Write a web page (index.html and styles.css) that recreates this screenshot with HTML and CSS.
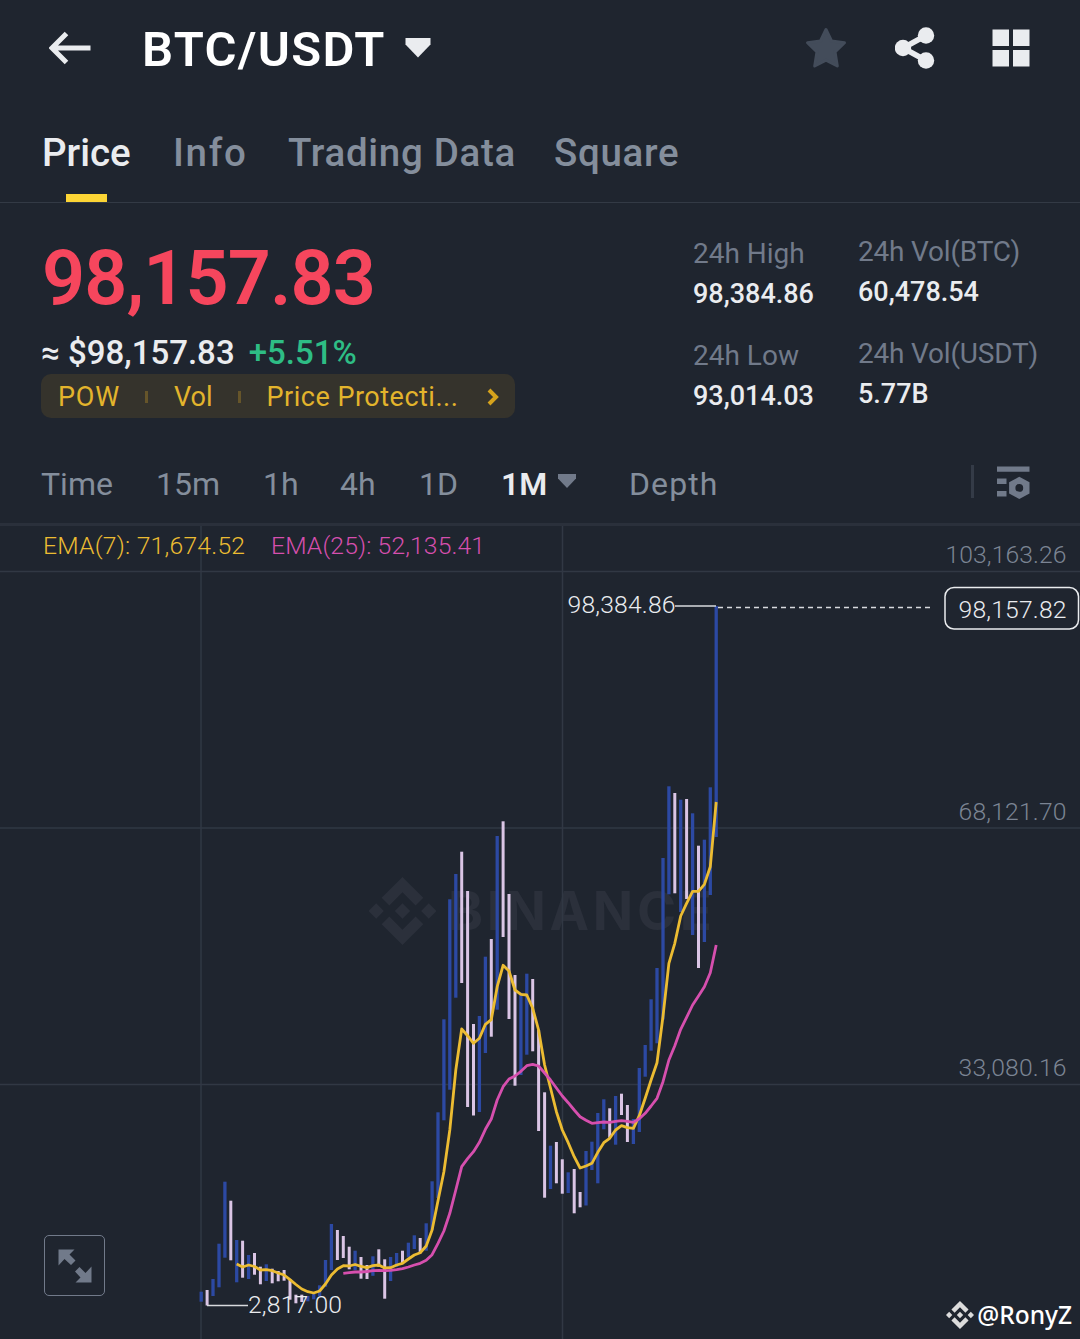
FILE: index.html
```html
<!DOCTYPE html>
<html lang="en">
  <head>
    <meta charset="UTF-8" />
    <meta name="viewport" content="width=device-width, initial-scale=1.0" />
    <title>BTC/USDT</title>
    <link rel="stylesheet" href="styles.css">
  </head>
  <body>
    <header class="topbar">
      <svg class="back" width="42" height="34" viewBox="0 0 42 34" aria-label="Back">
        <path d="M41.500 17H4M17.500 2.500L3 17l14.500 14.500" fill="none" stroke="#eaecef" stroke-width="5" />
      </svg>
      <h1 class="pair">BTC/USDT</h1>
      <svg class="pair-caret" width="26" height="20" viewBox="0 0 26 20">
        <path d="M.5 0h25v6.500L13 19.500.5 6.500z" fill="#eaecef" />
      </svg>
      <div class="actions">
        <svg width="42" height="42" viewBox="0 0 42 42" aria-label="Favorite">
          <path d="M21 2.500l5.500 11.500 13 1.700-9.500 9.100 2.300 14.200L21 33.200 9.700 39l2.300-14.200-9.500-9.100 13-1.700z" fill="#434c5a" stroke="#434c5a" stroke-width="3" stroke-linejoin="round" />
        </svg>
        <svg width="40" height="42" viewBox="0 0 40 42" aria-label="Share">
          <path d="M31 8.500L8 21l23 12.500" fill="none" stroke="#eaecef" stroke-width="5.500" />
          <circle cx="31" cy="8.500" r="8.200" fill="#eaecef" />
          <circle cx="8" cy="21" r="8.200" fill="#eaecef" />
          <circle cx="31" cy="33.500" r="8.200" fill="#eaecef" />
        </svg>
        <svg width="38" height="38" viewBox="0 0 38 38" aria-label="More">
          <path d="M.5.500H17V17H.5zM21 .500h16.500V17H21zM.5 21H17v16.500H.5zM21 21h16.500v16.500H21z" fill="#eaecef" />
        </svg>
      </div>
    </header>

    <nav class="tabs">
      <a class="tab active">Price</a>
      <a class="tab tab-info">Info</a>
      <a class="tab">Trading Data</a>
      <a class="tab">Square</a>
    </nav>

    <section class="summary">
      <div class="quote">
        <div class="last-price">98,157.83</div>
        <div class="fiat">
          <span>≈ $98,157.83</span>
          <span class="change">+5.51%</span>
        </div>
        <div class="tags">
          <span class="tag-pow">POW</span>
          <i></i>
          <span>Vol</span>
          <i></i>
          <span class="tag-protect">Price Protecti...</span>
          <svg width="12" height="18" viewBox="0 0 12 18">
            <path d="M2 2l7 7-7 7" fill="none" stroke="#d6a31c" stroke-width="4" />
          </svg>
        </div>
      </div>

      <div class="stats">
        <dl>
          <dt>24h High</dt>
          <dd>98,384.86</dd>
          <dt>24h Low</dt>
          <dd>93,014.03</dd>
        </dl>
        <dl class="volumes">
          <dt>24h Vol(BTC)</dt>
          <dd>60,478.54</dd>
          <dt>24h Vol(USDT)</dt>
          <dd>5.77B</dd>
        </dl>
      </div>
    </section>

    <div class="periods">
      <span>Time</span>
      <span>15m</span>
      <span>1h</span>
      <span>4h</span>
      <span>1D</span>
      <span class="selected">
        1M
        <svg width="18" height="14" viewBox="0 0 18 14">
          <path d="M0 0h18v4.500L9 14 0 4.500z" fill="#717a8a" />
        </svg>
      </span>
      <span class="depth">Depth</span>
      <svg class="indicators" width="33" height="33" viewBox="0 0 33 33" aria-label="Indicators">
        <path fill="#717a8a" fill-rule="evenodd" d="M0 .500h32.500v5.300H0zM0 12.500h9.500v5.500H0zM0 25h9.500v5.500H0zM22.300 10.800l10.200 5.500v11.200l-10.200 5.500-10.200-5.500V16.300zM22.300 18a3.900 3.900 0 1 0 0 7.800 3.900 3.900 0 0 0 0-7.800z" />
      </svg>
    </div>

    <main class="chart">
      <svg class="plot" width="1080" height="813" viewBox="0 526 1080 813">
        <defs>
          <symbol id="logo" viewBox="0 0 24 24">
            <path d="M16.624 13.920l2.717 2.716-7.353 7.353-7.353-7.352 2.718-2.717 4.635 4.660 4.636-4.660zM21.260 9.284L24 12l-2.715 2.716L18.568 12l2.692-2.716zM11.988 9.285l2.717 2.691-2.717 2.717L9.272 12l2.716-2.715zM2.716 9.284L5.409 12l-2.692 2.692L0 12l2.716-2.716zM11.988.012l7.353 7.329-2.717 2.715-4.636-4.636-4.635 4.660-2.718-2.716z" />
          </symbol>
        </defs>

        <g class="watermark">
          <use href="#logo" x="368.500" y="877" width="68" height="68" />
          <text x="448" y="930" textLength="264">BINANCE</text>
        </g>

        <path class="grid" d="M0 571.500H1080M0 828H1080M0 1084.500H1080M201 526V1339M562.500 526V1339" />

        <g id="candles"></g>
        <polyline id="ema7" class="ema ema7" />
        <polyline id="ema25" class="ema ema25" />

        <g class="axis">
          <text x="1066.500" y="563" textLength="121">103,163.26</text>
          <text x="1066.500" y="820" textLength="108">68,121.70</text>
          <text x="1066.500" y="1076" textLength="108">33,080.16</text>
        </g>

        <path class="leader" d="M675 606H716M207 1305.500H248" />
        <path class="last-line" d="M718 607.500H934" />
        <text class="extreme" x="567.500" y="613" textLength="108">98,384.86</text>
        <text class="extreme" x="248" y="1313" textLength="94">2,817.00</text>

        <rect class="last-tag" x="945" y="587.500" width="133.500" height="41.500" rx="9" />
        <text class="last-value" x="1066.500" y="618" textLength="108">98,157.82</text>

        <text class="ema7-label" x="43" y="554" textLength="202">EMA(7): 71,674.52</text>
        <text class="ema25-label" x="271" y="554" textLength="214">EMA(25): 52,135.41</text>
      </svg>

      <button class="expand" aria-label="Full screen">
        <svg width="34" height="34" viewBox="0 0 34 34">
          <path fill="#717a8a" d="M.5.500h16l-5 5 6 6-4.500 4.500-6.500-6-6 6.500zM33.500 33.500h-16l5-5-5.500-6 4.500-4.500 6 6 6-6.500z" />
        </svg>
      </button>

      <div class="handle">
        <svg width="28" height="28"><use href="#logo" fill="#dcdcdc" /></svg>
        <span>@RonyZ</span>
      </div>
    </main>

    <script src="chart.js"></script>
  </body>
</html>
```
FILE: styles.css
```css
* {
  box-sizing: border-box;
}

body {
  margin: 0;
  width: 1080px;
  height: 1339px;
  overflow: hidden;
  background: #1f252f;
  color: #eaecef;
  font-family: Roboto, "Noto Sans", sans-serif;
}

svg {
  display: block;
  flex-shrink: 0;
}

/* top bar */
.topbar {
  display: flex;
  align-items: center;
  height: 95px;
  padding: 0 50px 0 49px;
}

.pair {
  margin: 0 0 0 51px;
  padding-top: 5px;
  font-size: 49px;
  font-weight: 600;
  line-height: 60px;
  letter-spacing: 1.3px;
  color: #fff;
}

.pair-caret {
  margin-left: 19px;
}

.actions {
  display: flex;
  align-items: center;
  margin-left: auto;
}

.actions svg + svg {
  margin-left: 48px;
}

.actions svg:last-child {
  margin-left: 57px;
}

/* tabs */
.tabs {
  display: grid;
  grid-template-columns: 131px 115px 266px auto;
  justify-items: start;
  height: 108px;
  padding: 39px 42px 0;
  border-bottom: 1px solid #333a45;
}

.tab {
  font-size: 38.5px;
  font-weight: 500;
  line-height: 38px;
  letter-spacing: 0.7px;
  color: #848e9c;
}

.tab-info {
  letter-spacing: 1.7px;
}

.tab.active {
  letter-spacing: 0;
  color: #eaecef;
}

.tab.active::after {
  content: "";
  display: block;
  width: 41px;
  height: 8px;
  margin: 22px auto 0;
  background: #fcd535;
}

/* price and 24h stats */
.summary {
  display: flex;
  justify-content: space-between;
  height: 215px;
  padding-left: 41px;
}

.quote {
  padding-top: 37px;
}

.last-price {
  padding-left: 1px;
  font-size: 75.5px;
  font-weight: 600;
  line-height: 76px;
  letter-spacing: -0.9px;
  color: #f6465d;
}

.fiat {
  display: flex;
  gap: 14px;
  margin-top: 18px;
  font-size: 33px;
  font-weight: 500;
  line-height: 38px;
}

.change {
  color: #2ebd85;
}

.tags {
  display: flex;
  align-items: center;
  width: 474px;
  height: 44px;
  margin-top: 2px;
  padding: 1px 16px 0 17px;
  border-radius: 10px;
  background: #35332c;
  color: #e3b42c;
  font-size: 27px;
}

.tags i {
  width: 3px;
  height: 12px;
  margin: 0 26px 0 25px;
  background: #66552a;
}

.tag-pow {
  letter-spacing: 0.8px;
}

.tag-protect {
  letter-spacing: 0.5px;
}

.tags svg {
  margin-left: auto;
}

.stats {
  display: grid;
  grid-template-columns: 165px auto;
  width: 387px;
  padding-top: 34px;
}

.stats dl {
  margin: 0;
}

.stats .volumes {
  margin-top: -2px;
}

.stats dt {
  font-size: 28px;
  line-height: 34px;
  color: #717a8a;
}

.volumes dt {
  letter-spacing: -0.2px;
}

.stats dd {
  margin: 6px 0 28px;
  font-size: 27px;
  font-weight: 500;
  line-height: 34px;
}

/* chart periods */
.periods {
  display: grid;
  grid-template-columns: 115px 107px 77px 79px 82px 128px 345px auto;
  align-items: center;
  height: 108px;
  padding: 27px 0 0 41px;
  border-bottom: 3px solid #2a303b;
  font-size: 32px;
  line-height: 44px;
  color: #848e9c;
}

.selected {
  display: flex;
  gap: 11px;
  align-items: center;
  font-weight: 600;
  color: #eaecef;
}

.selected svg {
  margin-top: -6px;
}

.depth {
  display: flex;
  align-items: center;
  justify-content: space-between;
  letter-spacing: 1.1px;
}

.depth::after {
  content: "";
  width: 3px;
  height: 33px;
  margin-top: -5px;
  background: #343b47;
}

.indicators {
  margin: -4px 0 0 23px;
}

/* chart */
.chart {
  position: relative;
}

.plot text {
  font-size: 24.7px;
  font-weight: 300;
}

.grid {
  fill: none;
  stroke: #313844;
  stroke-width: 1.5;
}

.watermark {
  fill: #2b303b;
}

.plot .watermark text {
  font-family: Inter, sans-serif;
  font-size: 53px;
  font-weight: 700;
}

.up {
  stroke: #2c49a3;
  stroke-width: 3.3;
}

.down {
  stroke: #dac5e5;
  stroke-width: 3;
}

.ema {
  fill: none;
  stroke-width: 2.8;
  stroke-linejoin: round;
}

.ema7 {
  stroke: #ecbc32;
}

.ema25 {
  stroke: #d64fae;
}

.ema7-label {
  fill: #ecbc32;
}

.ema25-label {
  fill: #d64fae;
}

.axis {
  fill: #7b8493;
  text-anchor: end;
}

.leader {
  stroke: #d8dade;
  stroke-width: 1.5;
}

.last-line {
  stroke: #d8dade;
  stroke-width: 1.5;
  stroke-dasharray: 5 4;
}

.extreme {
  fill: #eaecef;
}

.last-tag {
  fill: #1f252f;
  stroke: #eaecef;
  stroke-width: 1.5;
}

.last-value {
  fill: #eaecef;
  text-anchor: end;
}

.expand {
  position: absolute;
  left: 44px;
  bottom: 43px;
  display: flex;
  align-items: center;
  justify-content: center;
  width: 61px;
  height: 61px;
  padding: 0;
  border: 1.5px solid #717a8a;
  border-radius: 5px;
  background: none;
}

.handle {
  position: absolute;
  right: 8px;
  bottom: 6px;
  display: flex;
  align-items: center;
  gap: 3px;
  font-family: "Noto Sans", sans-serif;
  font-size: 24.5px;
  font-weight: 500;
  line-height: 36px;
  color: #fff;
}
```
FILE: chart.js
```js
const X0 = 201.2;
const STEP = 5.92;

// monthly candles: [top, bottom, 1 = up / 0 = down]
const candles = [
  [1291.7, 1301.7, 1], [1290, 1305.5, 0], [1279, 1296, 1], [1243.7, 1287.3, 1],
  [1181.7, 1257.7, 1], [1200.7, 1260.3, 0], [1240, 1282.3, 1], [1240.7, 1277.7, 0],
  [1255, 1279, 1], [1253, 1274.7, 0], [1266.7, 1284.3, 0], [1264.3, 1281, 1],
  [1268.7, 1283.3, 0], [1271, 1281.3, 0], [1270, 1280.7, 0], [1279.3, 1299.7, 0],
  [1294.7, 1303.3, 0], [1294.7, 1302, 0], [1296, 1301.3, 1], [1294, 1299.3, 1],
  [1285.3, 1296, 1], [1260, 1286.7, 1], [1224, 1270, 1], [1230, 1260, 0],
  [1236, 1258, 0], [1246.7, 1269.3, 0], [1250.7, 1270, 1], [1257, 1278.7, 0],
  [1265, 1279, 0], [1256.3, 1275.8, 1], [1249.3, 1266.7, 0], [1259.3, 1298.7, 0],
  [1257, 1281, 1], [1253, 1267, 1], [1250.7, 1263, 0], [1242.7, 1257.3, 1],
  [1235.3, 1249, 1], [1238, 1253.3, 0], [1223.3, 1250.7, 1], [1181.3, 1230, 1],
  [1112.3, 1198, 1], [1019.3, 1120.3, 1], [899.3, 1089.7, 1], [874, 997.7, 1],
  [851.7, 983, 0], [891, 1107, 0], [1024, 1115.5, 0], [1016, 1112, 1],
  [956.7, 1053, 1], [939, 1036.7, 0], [836, 1009.7, 1], [821.3, 937, 0],
  [894, 1019, 0], [975, 1085.7, 0], [992.7, 1075, 1], [973.7, 1054.7, 1],
  [979, 1051.3, 0], [1030, 1131, 0], [1092.3, 1197.7, 0], [1145.7, 1189, 1],
  [1142, 1183.3, 0], [1159.3, 1193.7, 0], [1172.3, 1193, 1], [1169, 1213.3, 0],
  [1192, 1207.3, 0], [1151, 1205.5, 1], [1141.7, 1170, 1], [1113, 1183.3, 1],
  [1099.3, 1129.3, 1], [1108.3, 1137.7, 0], [1096, 1144.7, 1], [1093.7, 1115, 0],
  [1105, 1142, 0], [1119, 1144, 1], [1068, 1132, 1], [1045, 1076.7, 1],
  [999.3, 1050.7, 1], [968, 1043.3, 1], [858, 1019.6, 1], [786.3, 894.3, 1],
  [793, 893.3, 0], [799.7, 912, 1], [799, 899, 0], [813.3, 935, 1],
  [845.7, 968, 0], [839.7, 942, 1], [787.3, 895, 1], [606, 837, 1]
];

// starts at candle 6
const ema7 = [
  1264, 1267, 1265, 1266.5, 1270, 1269.7, 1270.7, 1273, 1275, 1279.7, 1284.5,
  1289, 1291.7, 1293, 1291, 1284, 1275, 1269, 1265.7, 1266, 1264.5, 1266.3,
  1267.7, 1265.7, 1265, 1268, 1267.7, 1265, 1263.3, 1259, 1255, 1252.7, 1246,
  1230, 1200.7, 1171.7, 1130, 1070, 1029, 1035.7, 1043.3, 1038.3, 1024.3,
  1019.7, 986.7, 965.3, 971, 990, 994.3, 995, 1008.3, 1030, 1065, 1088, 1111.7,
  1130, 1142.7, 1156.7, 1168, 1166, 1163.3, 1152.3, 1142.7, 1138.3, 1130,
  1125.7, 1127.7, 1128.3, 1115.7, 1098.3, 1080, 1062.7, 1016.3, 963.3, 943.3,
  916, 903.3, 891.3, 891.3, 884.3, 866.7, 802
];

// starts at candle 24
const ema25 = [
  1273.3, 1272.7, 1272, 1272, 1271.5, 1270.7, 1270.3, 1270.7, 1270.3, 1269.7,
  1268.7, 1267, 1265, 1263.3, 1260.3, 1254.7, 1243.3, 1231, 1213.3, 1190,
  1166.7, 1158.7, 1151.7, 1142.3, 1129.3, 1119, 1100, 1086.7, 1079, 1076,
  1071.3, 1065.7, 1064.3, 1066, 1073, 1080, 1088, 1096, 1102.7, 1110, 1116.7,
  1120.3, 1123.3, 1122.7, 1122, 1122.3, 1121.3, 1120.7, 1121.3, 1122.3, 1118.7,
  1113.3, 1106, 1098.3, 1081.7, 1060, 1045.7, 1029.3, 1017.3, 1005, 996, 986.7,
  972.7, 945
];

const x = i => (X0 + i * STEP).toFixed(1);

document.getElementById("candles").innerHTML = candles
  .map(([top, bottom, up], i) =>
    `<line class="${up ? "up" : "down"}" x1="${x(i)}" x2="${x(i)}" y1="${top}" y2="${bottom}" />`)
  .join("");

function drawLine(id, values, start) {
  document.getElementById(id).setAttribute(
    "points",
    values.map((y, i) => x(i + start) + "," + y).join(" ")
  );
}

drawLine("ema7", ema7, 6);
drawLine("ema25", ema25, 24);
```
